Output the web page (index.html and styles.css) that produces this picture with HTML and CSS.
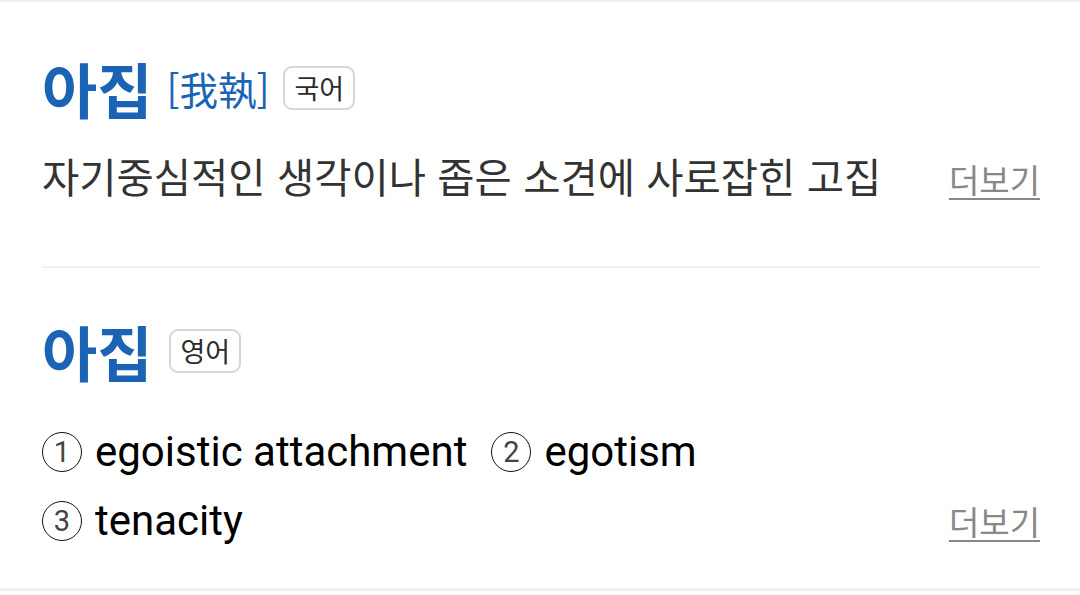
FILE: index.html
```html
<!DOCTYPE html>
<html lang="ko">
<head>
    <meta charset="UTF-8">
    <meta name="viewport" content="width=device-width, initial-scale=1.0">
    <title>아집</title>
    <link rel="stylesheet" href="styles.css">
</head>
<body>
    <div class="dict">
        <section class="entry">
            <div class="entry-head">
                <h2 class="word">아집</h2>
                <span class="hanja">[我執]</span>
                <span class="tag">국어</span>
            </div>
            <div class="entry-body">
                <p class="mean">자기중심적인 생각이나 좁은 소견에 사로잡힌 고집</p>
                <a class="more" href="#">더보기</a>
            </div>
        </section>
        <section class="entry">
            <div class="entry-head">
                <h2 class="word">아집</h2>
                <span class="tag">영어</span>
            </div>
            <div class="entry-body">
                <ul class="trans">
                    <li><span class="num">1</span>egoistic attachment</li>
                    <li><span class="num">2</span>egotism</li>
                    <li><span class="num">3</span>tenacity</li>
                </ul>
                <a class="more" href="#">더보기</a>
            </div>
        </section>
    </div>
</body>
</html>
```

FILE: styles.css
```css
html {
    background: #fff;
}
body {
    margin: 0;
    font-family: Roboto, "Noto Sans CJK KR", sans-serif;
    color: #000;
}
.dict {
    border-top: 2px solid #eeeeee;
    border-bottom: 3px solid #f0f0f0;
}
.entry {
    margin: 0 40px 0 42px;
    padding: 50px 0 64px;
}
.entry + .entry {
    border-top: 2px solid #f2f2f2;
    padding-top: 47px;
    padding-bottom: 41px;
}
.entry-head {
    display: flex;
    align-items: center;
    gap: 14px;
}
.entry + .entry .entry-head {
    gap: 17px;
}
.word {
    margin: 0;
    font-family: "Noto Sans CJK KR", sans-serif;
    font-size: 60px;
    font-weight: 700;
    line-height: 72px;
    color: #1b64b5;
}
.hanja {
    font-family: "Noto Sans CJK KR", sans-serif;
    font-size: 38.5px;
    color: #1b64b5;
}
.tag {
    padding: 3px 9px;
    border: 2px solid #d6d6d6;
    border-radius: 9px;
    font-family: "Noto Sans CJK KR", sans-serif;
    font-size: 27px;
    line-height: 34px;
    color: #2b2b2b;
}
.entry-body {
    display: flex;
    justify-content: space-between;
    align-items: last baseline;
    margin-top: 26px;
}
.mean {
    margin: 0;
    font-family: "Noto Sans CJK KR", sans-serif;
    font-size: 40.5px;
    line-height: 52px;
    color: #333;
}
.more {
    font-family: "Noto Sans CJK KR", sans-serif;
    font-size: 33px;
    line-height: 44px;
    color: #888;
    text-decoration: underline;
    text-decoration-thickness: 2px;
    text-underline-offset: 5px;
}
.trans {
    display: flex;
    flex-wrap: wrap;
    max-width: 720px;
    margin: 13px 0 0;
    padding: 0;
    list-style: none;
    column-gap: 24px;
    row-gap: 17px;
}
.trans li {
    display: flex;
    align-items: center;
    font-size: 42px;
    line-height: 52px;
}
.num {
    display: inline-flex;
    align-items: center;
    justify-content: center;
    box-sizing: border-box;
    width: 40px;
    height: 40px;
    margin-right: 13px;
    border: 1.5px solid #111;
    border-radius: 50%;
    font-size: 29px;
    color: #444;
}
```
